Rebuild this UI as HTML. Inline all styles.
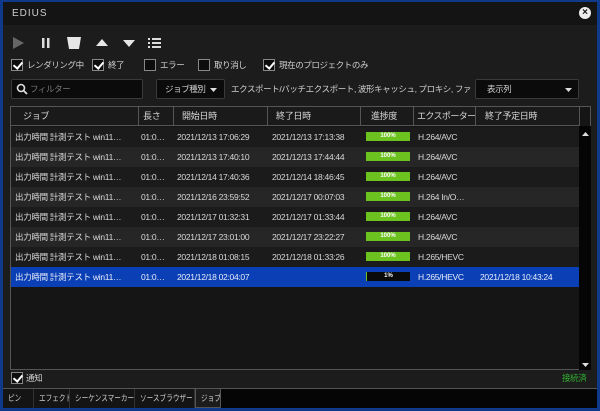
<!DOCTYPE html>
<html><head><meta charset="utf-8"><style>
*{margin:0;padding:0;box-sizing:border-box}
html,body{width:600px;height:411px;overflow:hidden}
body{background:#0f3a8a;font-family:"Liberation Sans","Noto Sans CJK JP",sans-serif;font-size:8.5px;color:#d8d8d8;position:relative}
.win{position:absolute;left:3px;top:2px;width:594px;height:406px;background:#1c1c1c;overflow:hidden}
.title{position:absolute;left:0;top:0;width:594px;height:23px;background:#141414}
.title span{position:absolute;left:9px;top:6px;font-size:10px;color:#cfcfcf;letter-spacing:1px}
.close{position:absolute;right:6px;top:5px;width:12px;height:12px;border-radius:50%;background:#eee;color:#111;font-size:10px;font-weight:bold;line-height:12px;text-align:center}
.abs{position:absolute}
.cb{position:absolute;width:12px;height:12px;border:1px solid #888;background:#0c0c0c}
.cb.on::after{content:"";position:absolute;left:3px;top:0px;width:4px;height:7px;border:solid #fff;border-width:0 2px 2px 0;transform:rotate(40deg)}
.lbl{position:absolute;font-size:8.5px;color:#d0d0d0;white-space:nowrap;letter-spacing:-0.4px;line-height:12px}
.box{position:absolute;background:#0b0b0b;border:1px solid #3a3a3a;border-radius:2px}
.table{position:absolute;left:7px;top:104px;width:581px;height:264px;background:#151515;border:1px solid #555}
.row{position:absolute;left:0;width:568px;height:20px}
.row div{position:absolute;top:0;line-height:20px;white-space:nowrap;font-size:8.5px;letter-spacing:-0.3px}
.hdr{background:#1a1a1a;height:19px;top:0;border-bottom:1px solid #555}
.hdr div{line-height:19px;font-size:9px}
.sep{position:absolute;top:0;width:1px;height:19px;background:#555}
.row .bar{top:5px;width:44px;height:9px;background:#6cc21e;color:#fff;font-size:6px;text-align:center;line-height:9px;font-weight:bold;letter-spacing:0}
.tab{position:absolute;top:387px;height:19px;font-size:8.5px;color:#ccc;padding:0 0 0 5px;line-height:19px;white-space:nowrap;overflow:hidden;border-right:1px solid #333;background:#141414}
.tab span{display:inline-block;transform:scaleX(0.78);transform-origin:left}
</style></head><body>
<div class="win">
<div class="title"><span>EDIUS</span><div class="close">×</div></div>
<svg class="abs" style="left:8px;top:33px" width="150" height="16">
<polygon points="2,2 13,8 2,14" fill="#666"/>
<rect x="31" y="3" width="2.5" height="10" fill="#ddd"/><rect x="36" y="3" width="2.5" height="10" fill="#ddd"/>
<path d="M56 2 H70 L68 14 H58 Z" fill="#e6e6e6"/>
<polygon points="85,11 91,4 97,11" fill="#e6e6e6"/>
<polygon points="112,5 124,5 118,12" fill="#e6e6e6"/>
<rect x="137" y="3" width="2" height="2" fill="#ddd"/><rect x="141" y="3" width="9" height="2" fill="#ddd"/>
<rect x="137" y="7" width="2" height="2" fill="#ddd"/><rect x="141" y="7" width="9" height="2" fill="#ddd"/>
<rect x="137" y="11" width="2" height="2" fill="#ddd"/><rect x="141" y="11" width="9" height="2" fill="#ddd"/>
</svg>
<div class="cb on" style="left:8px;top:57px"></div><div class="lbl" style="left:24px;top:57px">レンダリング中</div>
<div class="cb on" style="left:89px;top:57px"></div><div class="lbl" style="left:105px;top:57px">終了</div>
<div class="cb" style="left:141px;top:57px"></div><div class="lbl" style="left:157px;top:57px">エラー</div>
<div class="cb" style="left:195px;top:57px"></div><div class="lbl" style="left:211px;top:57px">取り消し</div>
<div class="cb on" style="left:260px;top:57px"></div><div class="lbl" style="left:276px;top:57px">現在のプロジェクトのみ</div>
<div class="box" style="left:8px;top:77px;width:132px;height:20px"></div>
<svg class="abs" style="left:13px;top:81px" width="12" height="12"><circle cx="5" cy="5" r="3.5" stroke="#ddd" stroke-width="1.6" fill="none"/><line x1="7.5" y1="7.5" x2="11" y2="11" stroke="#ddd" stroke-width="1.8"/></svg>
<div class="lbl" style="left:27px;top:81px;color:#777">フィルター</div>
<div class="box" style="left:153px;top:77px;width:69px;height:20px"></div>
<div class="lbl" style="left:162px;top:81px">ジョブ種別</div>
<svg class="abs" style="left:207px;top:86px" width="8" height="5"><polygon points="0,0 7,0 3.5,4" fill="#ddd"/></svg>
<div class="lbl" style="left:228px;top:81px;width:240px;overflow:hidden">エクスポート/バッチエクスポート, 波形キャッシュ, プロキシ, ファ…</div>
<div class="box" style="left:472px;top:77px;width:104px;height:20px"></div>
<div class="lbl" style="left:484px;top:81px">表示列</div>
<svg class="abs" style="left:562px;top:86px" width="8" height="5"><polygon points="0,0 7,0 3.5,4" fill="#ddd"/></svg>
<div class="table">
<div class="row hdr">
<div style="left:12px">ジョブ</div><div class="sep" style="left:127px"></div>
<div style="left:132px">長さ</div><div class="sep" style="left:162px"></div>
<div style="left:171px">開始日時</div><div class="sep" style="left:256px"></div>
<div style="left:265px">終了日時</div><div class="sep" style="left:349px"></div>
<div style="left:360px">進捗度</div><div class="sep" style="left:402px"></div>
<div style="left:406px;letter-spacing:-0.6px">エクスポーター</div><div class="sep" style="left:464px"></div>
<div style="left:474px">終了予定日時</div><div class="sep" style="left:568px"></div>
</div>
<div style="position:absolute;left:568px;top:19px;width:12px;height:244px;background:#050505"></div>
<svg class="abs" style="left:571px;top:25px" width="7" height="4"><polygon points="0,4 7,4 3.5,0" fill="#ddd"/></svg>
<svg class="abs" style="left:571px;top:256px" width="7" height="4"><polygon points="0,0 7,0 3.5,4" fill="#ddd"/></svg>
<div class="row" style="top:20px;background:#1b1b1b"><div style="left:4px">出力時間 計測テスト win11…</div><div style="left:130px">01:0…</div><div style="left:166px">2021/12/13 17:06:29</div><div style="left:261px">2021/12/13 17:13:38</div><div class="bar" style="left:355px">100%</div><div style="left:407px">H.264/AVC</div></div>
<div class="row" style="top:40px;background:#262626"><div style="left:4px">出力時間 計測テスト win11…</div><div style="left:130px">01:0…</div><div style="left:166px">2021/12/13 17:40:10</div><div style="left:261px">2021/12/13 17:44:44</div><div class="bar" style="left:355px">100%</div><div style="left:407px">H.264/AVC</div></div>
<div class="row" style="top:60px;background:#1b1b1b"><div style="left:4px">出力時間 計測テスト win11…</div><div style="left:130px">01:0…</div><div style="left:166px">2021/12/14 17:40:36</div><div style="left:261px">2021/12/14 18:46:45</div><div class="bar" style="left:355px">100%</div><div style="left:407px">H.264/AVC</div></div>
<div class="row" style="top:80px;background:#262626"><div style="left:4px">出力時間 計測テスト win11…</div><div style="left:130px">01:0…</div><div style="left:166px">2021/12/16 23:59:52</div><div style="left:261px">2021/12/17 00:07:03</div><div class="bar" style="left:355px">100%</div><div style="left:407px">H.264 In/O…</div></div>
<div class="row" style="top:100px;background:#1b1b1b"><div style="left:4px">出力時間 計測テスト win11…</div><div style="left:130px">01:0…</div><div style="left:166px">2021/12/17 01:32:31</div><div style="left:261px">2021/12/17 01:33:44</div><div class="bar" style="left:355px">100%</div><div style="left:407px">H.264/AVC</div></div>
<div class="row" style="top:120px;background:#262626"><div style="left:4px">出力時間 計測テスト win11…</div><div style="left:130px">01:0…</div><div style="left:166px">2021/12/17 23:01:00</div><div style="left:261px">2021/12/17 23:22:27</div><div class="bar" style="left:355px">100%</div><div style="left:407px">H.264/AVC</div></div>
<div class="row" style="top:140px;background:#1b1b1b"><div style="left:4px">出力時間 計測テスト win11…</div><div style="left:130px">01:0…</div><div style="left:166px">2021/12/18 01:08:15</div><div style="left:261px">2021/12/18 01:33:26</div><div class="bar" style="left:355px">100%</div><div style="left:407px">H.265/HEVC</div></div>
<div class="row" style="top:160px;background:#0a3fb5;color:#e8eefc"><div style="left:4px">出力時間 計測テスト win11…</div><div style="left:130px">01:0…</div><div style="left:166px">2021/12/18 02:04:07</div><div class="bar" style="left:355px;background:#0a0a0a;border-left:1px solid #6cc21e">1%</div><div style="left:407px">H.265/HEVC</div><div style="left:469px">2021/12/18 10:43:24</div></div>
</div>
<div class="cb on" style="left:8px;top:370px"></div><div class="lbl" style="left:23px;top:370px">通知</div>
<div class="lbl" style="left:559px;top:370px;color:#2fa82f">接続済</div>
<div style="position:absolute;left:0;top:386px;width:594px;height:20px;background:#050505;border-top:1px solid #555"></div>
<div class="tab" style="left:0;width:31px"><span>ピン</span></div>
<div class="tab" style="left:31px;width:36px"><span>エフェクト</span></div>
<div class="tab" style="left:67px;width:65px"><span>シーケンスマーカー</span></div>
<div class="tab" style="left:132px;width:60px"><span>ソースブラウザー</span></div>
<div class="tab" style="left:192px;width:26px;background:#1c1c1c;border:1px solid #555;border-top:none"><span>ジョブ</span></div>
</div>
</body></html>
